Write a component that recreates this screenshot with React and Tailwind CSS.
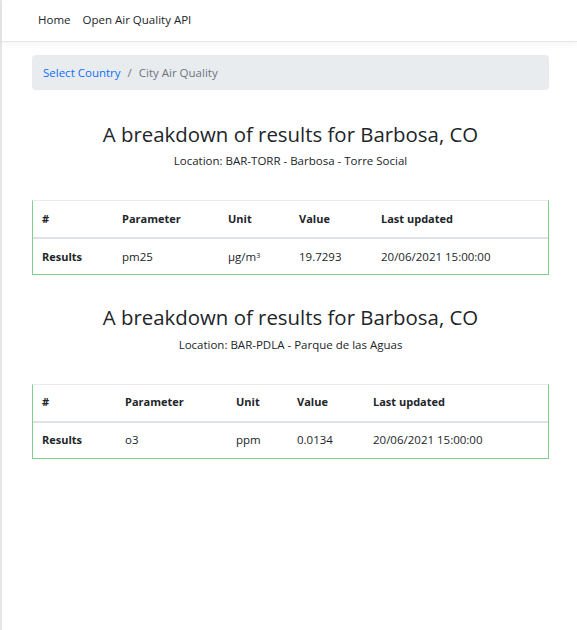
const results = [
  {
    title: "A breakdown of results for Barbosa, CO",
    location: "BAR-TORR - Barbosa - Torre Social",
    cols: ["w-[80px]", "w-[106px]", "w-[71px]", "w-[82px]", ""],
    parameter: "pm25",
    unit: "µg/m³",
    value: "19.7293",
    updated: "20/06/2021 15:00:00",
  },
  {
    title: "A breakdown of results for Barbosa, CO",
    location: "BAR-PDLA - Parque de las Aguas",
    cols: ["w-[83px]", "w-[111px]", "w-[61px]", "w-[76px]", ""],
    parameter: "o3",
    unit: "ppm",
    value: "0.0134",
    updated: "20/06/2021 15:00:00",
  },
];

function ResultTable({ r }) {
  const heads = ["#", "Parameter", "Unit", "Value", "Last updated"];
  return (
    <div className="border-x border-b border-t border-x-[#7fcf8e] border-b-[#7fcf8e] border-t-[#e9ecef]">
      <table className="w-full table-fixed border-collapse text-[11.5px] text-[#212529]">
        <colgroup>
          {r.cols.map((c, i) => (
            <col key={i} className={c} />
          ))}
        </colgroup>
        <thead>
          <tr className="border-b-2 border-[#dee2e6]">
            {heads.map((h) => (
              <th key={h} className="h-[37px] px-[9px] text-left text-[11px] font-bold">
                {h}
              </th>
            ))}
          </tr>
        </thead>
        <tbody>
          <tr>
            <th className="h-[36px] px-[9px] text-left text-[11px] font-bold">Results</th>
            <td className="px-[9px]">{r.parameter}</td>
            <td className="px-[9px]">
              {r.unit === "µg/m³" ? (
                <span>
                  µg/m<sup className="text-[7px]">3</sup>
                </span>
              ) : (
                r.unit
              )}
            </td>
            <td className="px-[9px]">{r.value}</td>
            <td className="px-[9px]">{r.updated}</td>
          </tr>
        </tbody>
      </table>
    </div>
  );
}

export default function App() {
  return (
    <div className="min-h-[630px] border-l-2 border-[#e5e5e5] bg-white font-['Segoe_UI','Open_Sans',sans-serif] text-[#212529]">
      <nav className="flex h-[42px] items-center gap-[12px] border-b border-[#e5e5e5] px-[36px] pb-[1px] text-[11.5px] shadow-[0_3px_6px_rgba(0,0,0,0.04)]">
        <a className="text-[#212529]">Home</a>
        <a className="text-[#212529]">Open Air Quality API</a>
      </nav>
      <main className="mx-[30px] mr-[28px] pt-[13px]">
        <div className="flex h-[35px] items-center gap-[7px] rounded bg-[#e9ecef] px-[11px] text-[11.5px]">
          <a className="text-[#0d6efd]">Select Country</a>
          <span className="text-[#6c757d]">/</span>
          <span className="text-[#6c757d]">City Air Quality</span>
        </div>
        {results.map((r, i) => (
          <section key={i} className={i === 0 ? "pt-[30px]" : "pt-[28px]"}>
            <h3 className="text-center text-[20.4px] font-medium leading-[28px]">{r.title}</h3>
            <p className={`text-center text-[11.5px] ${i === 0 ? "mt-[4px]" : "mt-[5px]"}`}>
              Location: {r.location}
            </p>
            <div className={i === 0 ? "mt-[31px]" : "mt-[30px]"}>
              <ResultTable r={r} />
            </div>
          </section>
        ))}
      </main>
    </div>
  );
}
